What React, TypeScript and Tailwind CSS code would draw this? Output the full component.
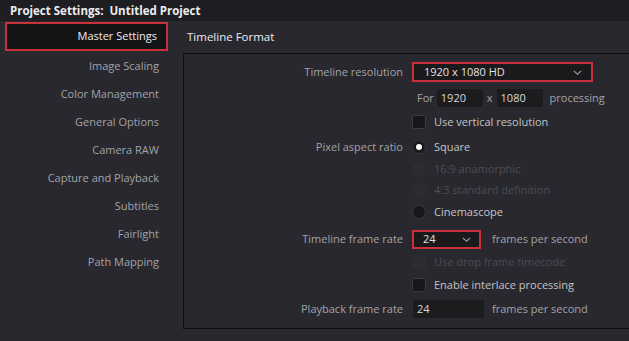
import React from 'react'

const sideItems = [
  'Image Scaling',
  'Color Management',
  'General Options',
  'Camera RAW',
  'Capture and Playback',
  'Subtitles',
  'Fairlight',
  'Path Mapping',
]

function Chevron() {
  return (
    <svg width="9" height="5" viewBox="0 0 9 5" className="shrink-0">
      <polyline points="0.8,0.8 4.5,4.2 8.2,0.8" fill="none" stroke="#9c9ca2" strokeWidth="1.1" />
    </svg>
  )
}

function Checkbox({ disabled }: { disabled?: boolean }) {
  return (
    <div
      className={
        disabled
          ? 'w-[14px] h-[14px] rounded-[2px] bg-[#2c2c31] shrink-0'
          : 'w-[14px] h-[14px] rounded-[2px] bg-[#18181b] border border-[#3a3a40] shrink-0'
      }
    />
  )
}

function Radio({ checked, disabled }: { checked?: boolean; disabled?: boolean }) {
  return (
    <div
      className={
        disabled
          ? 'w-[14px] h-[14px] rounded-full bg-[#2c2c31] shrink-0'
          : 'w-[14px] h-[14px] rounded-full bg-[#18181b] border border-[#36363c] flex items-center justify-center shrink-0'
      }
    >
      {checked && <div className="w-[6px] h-[6px] rounded-full bg-white" />}
    </div>
  )
}

export default function App() {
  return (
    <div
      className="w-[629px] h-[341px] bg-[#28282e] flex flex-col overflow-hidden text-[11px] text-[#a3a3a9]"
      style={{ fontFamily: '"Open Sans", "Liberation Sans", sans-serif' }}
    >
      {/* title bar */}
      <div className="h-[21px] bg-[#1e1e22] pl-[10px] flex items-center text-[11.5px] font-bold text-[#ececee] whitespace-pre">
        Project Settings:  Untitled Project
      </div>

      <div className="flex flex-1">
        {/* sidebar */}
        <div className="w-[170px] pt-[1px]">
          <div className="ml-[5px] w-[163px] h-[29px] border-2 border-[#c8303a] bg-[#141417] flex items-center justify-end pr-[9px] text-[#ececee]">
            Master Settings
          </div>
          <div className="pt-[1px]">
            {sideItems.map((item) => (
              <div key={item} className="h-[28px] flex items-center justify-end pr-[11px]">
                {item}
              </div>
            ))}
          </div>
        </div>

        {/* main */}
        <div className="flex-1 flex flex-col">
          <div className="h-[32px] pl-[17px] flex items-center text-[#ececee] text-[11.5px]">Timeline Format</div>
          <div className="ml-[13px] h-[276px] border-l border-t border-b border-[#0e0e11] pt-[8px] grid grid-cols-[219px_1fr] gap-x-[9px] content-start">
            <div className="h-[20px] flex items-center justify-end pr-[-2px]">Timeline resolution</div>
            <div className="h-[20px] flex items-center">
              <div className="w-[181px] h-[20px] border-2 border-[#c8303a] bg-[#1a1a1d] flex items-center justify-between pl-[10px] pr-[9px] text-[#e2e2e4]">
                <span>1920 x 1080 HD</span>
                <Chevron />
              </div>
            </div>

            <div className="mt-[6px] h-[20px]" />
            <div className="mt-[6px] h-[20px] flex items-center pl-[5px]">
              <span>For</span>
              <div className="ml-[3px] w-[46px] h-[18px] bg-[#1c1c1f] flex items-center pl-[4px] text-[#d8d8da]">1920</div>
              <span className="mx-[4px]">x</span>
              <div className="w-[46px] h-[18px] bg-[#1c1c1f] flex items-center pl-[4px] text-[#d8d8da]">1080</div>
              <span className="ml-[7px]">processing</span>
            </div>

            <div className="mt-[4px] h-[20px]" />
            <div className="mt-[4px] h-[20px] flex items-center gap-[8px] text-[#c4c4c8]">
              <Checkbox />
              <span>Use vertical resolution</span>
            </div>

            <div className="mt-[5px] h-[20px] flex items-center justify-end">Pixel aspect ratio</div>
            <div className="mt-[5px] h-[20px] flex items-center gap-[8px] text-[#c4c4c8]">
              <Radio checked />
              <span>Square</span>
            </div>

            <div className="mt-[2px] h-[20px]" />
            <div className="mt-[2px] h-[20px] flex items-center gap-[8px] text-[#4d4d53]">
              <Radio disabled />
              <span>16:9 anamorphic</span>
            </div>

            <div className="mt-[1px] h-[20px]" />
            <div className="mt-[1px] h-[20px] flex items-center gap-[8px] text-[#4d4d53]">
              <Radio disabled />
              <span>4:3 standard definition</span>
            </div>

            <div className="mt-[2px] h-[20px]" />
            <div className="mt-[2px] h-[20px] flex items-center gap-[8px] text-[#c4c4c8]">
              <Radio />
              <span>Cinemascope</span>
            </div>

            <div className="mt-[7px] h-[20px] flex items-center justify-end">Timeline frame rate</div>
            <div className="mt-[7px] h-[20px] flex items-center">
              <div className="w-[69px] h-[19px] border-2 border-[#c8303a] bg-[#1a1a1d] flex items-center justify-between pl-[9px] pr-[8px] text-[#e2e2e4]">
                <span>24</span>
                <Chevron />
              </div>
              <span className="ml-[11px]">frames per second</span>
            </div>

            <div className="mt-[3px] h-[20px]" />
            <div className="mt-[3px] h-[20px] flex items-center gap-[8px] text-[#4d4d53]">
              <Checkbox disabled />
              <span>Use drop frame timecode</span>
            </div>

            <div className="mt-[3px] h-[20px]" />
            <div className="mt-[3px] h-[20px] flex items-center gap-[8px] text-[#c4c4c8]">
              <Checkbox />
              <span>Enable interlace processing</span>
            </div>

            <div className="mt-[4px] h-[20px] flex items-center justify-end">Playback frame rate</div>
            <div className="mt-[4px] h-[20px] flex items-center">
              <div className="ml-[1px] w-[71px] h-[18px] bg-[#1c1c1f] flex items-center pl-[4px] text-[#d8d8da]">24</div>
              <span className="ml-[8px]">frames per second</span>
            </div>
          </div>
        </div>
      </div>
    </div>
  )
}
